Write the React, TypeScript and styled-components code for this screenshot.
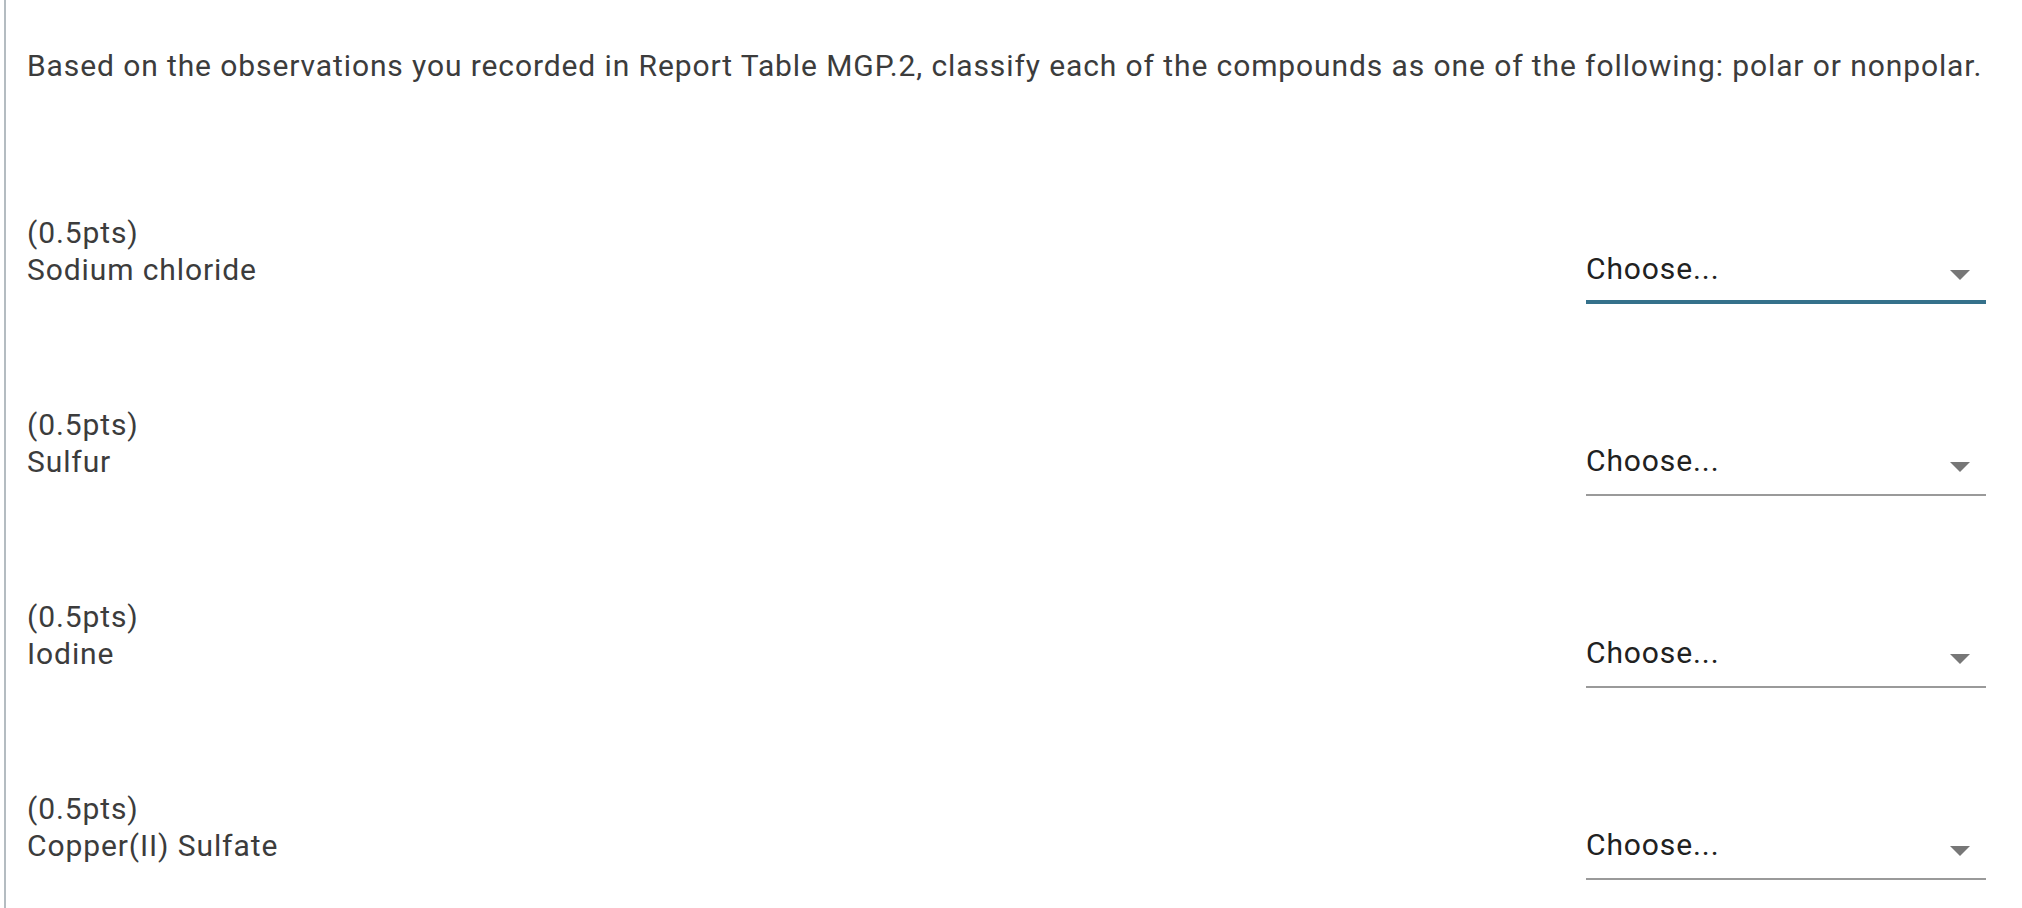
import styled, { createGlobalStyle } from "styled-components";

const GlobalStyle = createGlobalStyle`
  html, body {
    margin: 0;
    padding: 0;
    background: #ffffff;
  }
  body {
    font-family: Roboto, "Noto Sans", "Liberation Sans", sans-serif;
  }
`;

const Panel = styled.div`
  margin-left: 4px;
  border-left: 2px solid #b4bcc1;
  padding: 47px 36px 0 21px;
  min-height: 100vh;
  box-sizing: border-box;
  font-size: 30px;
  line-height: 37px;
  letter-spacing: 0.9px;
  color: #3c3c3c;
`;

const Prompt = styled.div`
  margin-bottom: 130px;
  white-space: nowrap;
`;

const List = styled.div`
  display: flex;
  flex-direction: column;
  gap: 102px;
`;

const Row = styled.div`
  display: flex;
  justify-content: space-between;
  align-items: flex-start;
`;

const Label = styled.div`
  display: flex;
  flex-direction: column;
`;

const Select = styled.div<{ $focused?: boolean }>`
  width: 400px;
  height: 54px;
  margin-top: 36px;
  box-sizing: border-box;
  display: flex;
  align-items: flex-start;
  color: #212121;
  border-bottom: ${(p) => (p.$focused ? "4px solid #35718b" : "2px solid #9a9a9a")};
  cursor: pointer;
`;

const Caret = styled.span`
  margin-left: auto;
  margin-right: 16px;
  margin-top: 20px;
  width: 0;
  height: 0;
  border-left: 10px solid transparent;
  border-right: 10px solid transparent;
  border-top: 10px solid #777777;
`;

const items = ["Sodium chloride", "Sulfur", "Iodine", "Copper(II) Sulfate"];

export default function App() {
  return (
    <>
      <GlobalStyle />
      <Panel>
        <Prompt>
          Based on the observations you recorded in Report Table MGP.2, classify each of the compounds as one of the following: polar or nonpolar.
        </Prompt>
        <List>
          {items.map((name, i) => (
            <Row key={name}>
              <Label>
                <span>(0.5pts)</span>
                <span>{name}</span>
              </Label>
              <Select $focused={i === 0}>
                <span>Choose...</span>
                <Caret />
              </Select>
            </Row>
          ))}
        </List>
      </Panel>
    </>
  );
}
